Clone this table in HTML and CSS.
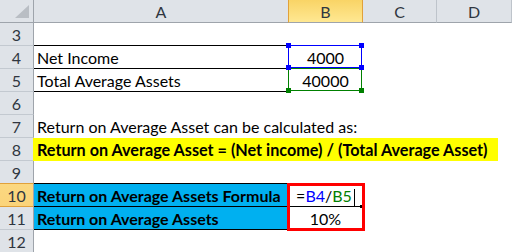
FILE: index.html
```html
<!DOCTYPE html>
<html>
<head>
<meta charset="utf-8">
<link rel="stylesheet" href="styles.css">
</head>
<body>
<div class="sheet">
  <div class="corner"><svg class="tri" width="14" height="13" viewBox="0 0 14 13"><polygon points="14,0 14,13 0,13" fill="#b9bec4"/></svg></div>
  <div class="ch">A</div>
  <div class="ch ch-sel">B</div>
  <div class="ch">C</div>
  <div class="ch">D</div>

  <div class="rh">3</div><div class="c bb"></div><div class="c"></div><div class="c"></div><div class="c"></div>

  <div class="rh">4</div><div class="c bb">Net Income</div>
  <div class="c num sel-wrap">4000<div class="sel sel-blue"><i class="h tl"></i><i class="h tr"></i><i class="h bl"></i><i class="h br"></i></div></div>
  <div class="c"></div><div class="c"></div>

  <div class="rh">5</div><div class="c bb">Total Average Assets</div>
  <div class="c num sel-wrap">40000<div class="sel sel-green"><i class="h bl"></i><i class="h br"></i></div></div>
  <div class="c"></div><div class="c"></div>

  <div class="rh">6</div><div class="c"></div><div class="c"></div><div class="c"></div><div class="c"></div>

  <div class="rh">7</div><div class="c span">Return on Average Asset can be calculated as:</div>

  <div class="rh">8</div><div class="c span"><span class="hl">Return on Average Asset = (Net income) / (Total Average Asset)</span></div>

  <div class="rh">9</div><div class="c bb"></div><div class="c"></div><div class="c"></div><div class="c"></div>

  <div class="rh rh-sel">10</div><div class="c bb blue bold">Return on Average Assets Formula</div>
  <div class="c num bb sel-wrap"><span class="k">=</span><span class="r1">B4</span><span class="k">/</span><span class="r2">B5</span><span class="caret"></span><div class="red"></div><i class="fill"></i></div>
  <div class="c"></div><div class="c"></div>

  <div class="rh">11</div><div class="c bb blue bold">Return on Average Assets</div>
  <div class="c num bb">10%</div>
  <div class="c"></div><div class="c"></div>

  <div class="rh">12</div><div class="c"></div><div class="c"></div><div class="c"></div><div class="c"></div>
</div>
</body>
</html>
```

FILE: styles.css
```css
html, body {
  margin: 0;
  padding: 0;
  background: #ffffff;
}
.sheet {
  display: grid;
  grid-template-columns: 34px 255px 74px 74px 75px;
  grid-auto-rows: 23px;
  font-family: Lato, "Liberation Sans", sans-serif;
  font-size: 16px;
  color: #000;
  width: 512px;
  overflow: hidden;
}
.corner {
  box-sizing: border-box;
  background: #dfe3e8;
  border-right: 1px solid #9ea4ab;
  border-bottom: 1px solid #9ea4ab;
  display: flex;
  align-items: flex-end;
  justify-content: flex-end;
  padding: 0 4px 4px 0;
}
.tri { display: block; }
.ch {
  box-sizing: border-box;
  background: #dfe3e8;
  border-right: 1px solid #bec4cb;
  border-bottom: 1px solid #9ea4ab;
  display: flex;
  align-items: center;
  justify-content: center;
  color: #2f3640;
  padding-top: 1px;
}
.ch-sel {
  background: linear-gradient(#f9d466, #ffe892);
  border-right: 1px solid #e1a13a;
  border-left: 1px solid #e1a13a;
  margin-left: -1px;
}
.rh {
  box-sizing: border-box;
  background: #dfe3e8;
  border-right: 1px solid #9ea4ab;
  border-bottom: 1px solid #c3c9d0;
  display: flex;
  align-items: center;
  justify-content: center;
  color: #2f3640;
  padding-top: 1px;
}
.rh-sel {
  background: linear-gradient(#fbd880, #fbd47a);
  border-top: 1px solid #e1a13a;
  border-bottom: 1px solid #e1a13a;
  margin-top: -1px;
  height: 24px;
}
.c {
  box-sizing: border-box;
  border-bottom: 1px solid transparent;
  border-right: 1px solid transparent;
  padding: 2px 3px 0;
  line-height: 20px;
  white-space: nowrap;
  position: relative;
}
.span {
  grid-column: 2 / 6;
}
.bb { border-bottom-color: #000; }
.num { text-align: center; }
.blue { background: #00b0f0; }
.bold { font-weight: 700; }
.hl {
  display: block;
  margin: -2px 0 0 -4px;
  padding: 2px 0 0 4px;
  width: 461px;
  height: 21px;
  background: #ffff00;
  font-weight: 700;
  font-size: 16.2px;
}
.sel-wrap { position: relative; }
.sel {
  position: absolute;
  left: -1px;
  top: -1px;
  right: 0;
  bottom: 0;
  box-sizing: border-box;
}
.sel-blue { border: 1px solid #0000ff; z-index: 3; }
.sel-green { border: 1px solid #008000; z-index: 2; }
.h {
  position: absolute;
  width: 5px;
  height: 5px;
}
.sel-blue .h { background: #0000ff; }
.sel-green .h { background: #008000; }
.tl { left: -3px; top: -3px; }
.tr { right: -3px; top: -3px; }
.bl { left: -3px; bottom: -3px; }
.br { right: -3px; bottom: -3px; }
.k { color: #000; }
.r1 { color: #0000ff; }
.r2 { color: #008000; }
.caret {
  display: inline-block;
  width: 1px;
  height: 17px;
  background: #000;
  vertical-align: -4px;
  margin-left: 2px;
}
.red {
  position: absolute;
  left: -2px;
  top: -1px;
  width: 78px;
  height: 48px;
  box-sizing: border-box;
  border: 3px solid #ff0000;
  z-index: 4;
}
.fill {
  position: absolute;
  right: -1px;
  bottom: -2px;
  width: 3px;
  height: 3px;
  background: #000;
  z-index: 3;
}
```
